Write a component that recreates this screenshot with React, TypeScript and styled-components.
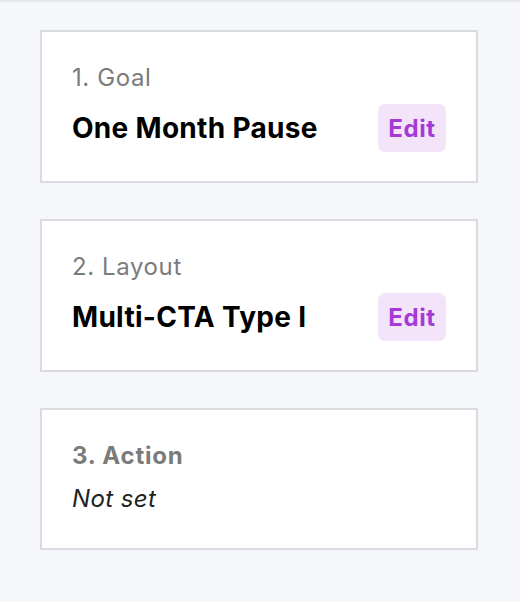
import styled, { createGlobalStyle } from "styled-components";

const GlobalStyle = createGlobalStyle`
  html, body {
    margin: 0;
    padding: 0;
    background: #f6f7fb;
  }
  body {
    font-family: Inter, "Noto Sans", "Liberation Sans", sans-serif;
    -webkit-font-smoothing: antialiased;
  }
`

const Page = styled.div`
  min-height: 602px;
  box-sizing: border-box;
  border-top: 2px solid #e6e7eb;
  padding: 28px 42px 40px 40px;
  display: flex;
  flex-direction: column;
  gap: 36px;
`

const Card = styled.section<{ $compact?: boolean }>`
  background: #fff;
  border: 2px solid #d9dbe0;
  padding: 32px 30px ${(p) => (p.$compact ? "35px" : "29px")} 30px;
  display: flex;
  flex-direction: column;
  gap: ${(p) => (p.$compact ? "15px" : "12px")};
`

const StepLabel = styled.div<{ $strong?: boolean }>`
  font-size: 24px;
  line-height: 28px;
  letter-spacing: ${(p) => (p.$strong ? "0.8px" : "0.6px")};
  color: #7b7b7b;
  font-weight: ${(p) => (p.$strong ? 700 : 400)};
`

const Row = styled.div`
  display: flex;
  align-items: center;
  justify-content: space-between;
  height: 48px;
`

const Value = styled.div`
  font-size: 28px;
  line-height: 32px;
  letter-spacing: 0.3px;
  font-weight: 700;
  color: #000;
`

const EmptyValue = styled.div`
  font-size: 24px;
  line-height: 28px;
  letter-spacing: 0.4px;
  font-style: italic;
  color: #222;
`

const EditButton = styled.button`
  height: 48px;
  width: 68px;
  border: none;
  border-radius: 7px;
  background: #f4e4fa;
  color: #a43bd6;
  font-family: inherit;
  font-size: 24px;
  letter-spacing: 0.6px;
  font-weight: 700;
  cursor: pointer;
  padding: 0;

  &:hover {
    background: #ecd3f6;
  }
`

type Step = {
  label: string
  value?: string
}

const steps: Step[] = [
  { label: "1. Goal", value: "One Month Pause" },
  { label: "2. Layout", value: "Multi-CTA Type I" },
  { label: "3. Action" },
]

const App = () => {
  return (
    <>
      <GlobalStyle />
      <Page>
        {steps.map((step) =>
          step.value ? (
            <Card key={step.label}>
              <StepLabel>{step.label}</StepLabel>
              <Row>
                <Value>{step.value}</Value>
                <EditButton>Edit</EditButton>
              </Row>
            </Card>
          ) : (
            <Card key={step.label} $compact>
              <StepLabel $strong>{step.label}</StepLabel>
              <EmptyValue>Not set</EmptyValue>
            </Card>
          )
        )}
      </Page>
    </>
  )
}

export default App
